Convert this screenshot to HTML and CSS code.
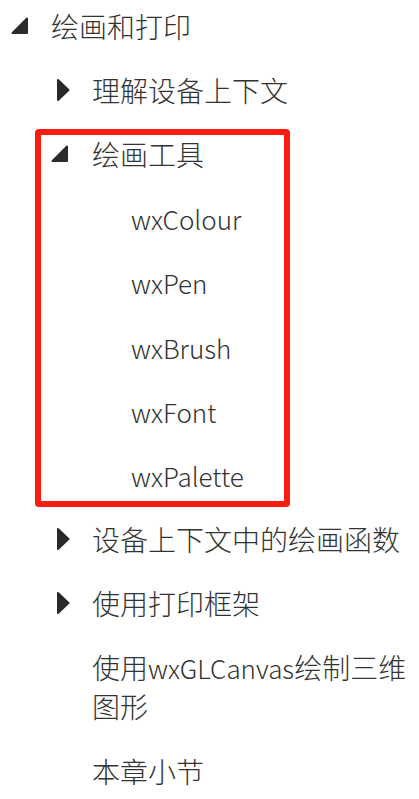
FILE: index.html
```html
<!DOCTYPE html>
<html lang="zh">
<head>
<meta charset="utf-8">
<link rel="stylesheet" href="styles.css">
</head>
<body>
<ul class="tree">
  <li class="row lvl0">
    <svg class="twisty" viewBox="0 0 40 39"><path class="tri" d="M16 11.5 L16 26 L1.5 26 Z"/></svg>
    <span class="label">绘画和打印</span>
  </li>
  <li class="row lvl1">
    <svg class="twisty" viewBox="0 0 40 39"><path class="tri" d="M7 9 L17.5 19 L7 29 Z"/></svg>
    <span class="label">理解设备上下文</span>
  </li>
  <li class="group">
    <ul class="sub">
      <li class="row lvl1">
        <svg class="twisty" viewBox="0 0 40 39"><path class="tri" d="M16 11.5 L16 26 L1.5 26 Z"/></svg>
        <span class="label">绘画工具</span>
      </li>
      <li class="row lvl2"><span class="label lat">wxColour</span></li>
      <li class="row lvl2"><span class="label lat">wxPen</span></li>
      <li class="row lvl2"><span class="label lat">wxBrush</span></li>
      <li class="row lvl2"><span class="label lat">wxFont</span></li>
      <li class="row lvl2"><span class="label lat">wxPalette</span></li>
    </ul>
    <div class="highlight"></div>
  </li>
  <li class="row lvl1">
    <svg class="twisty" viewBox="0 0 40 39"><path class="tri" d="M7 9 L17.5 19 L7 29 Z"/></svg>
    <span class="label">设备上下文中的绘画函数</span>
  </li>
  <li class="row lvl1">
    <svg class="twisty" viewBox="0 0 40 39"><path class="tri" d="M7 9 L17.5 19 L7 29 Z"/></svg>
    <span class="label">使用打印框架</span>
  </li>
  <li class="row leaf"><p class="label mixed"><span>使用</span><span class="lat">wxGLCanvas</span><span>绘制三维</span><span>图形</span></p></li>
  <li class="row leaf"><span class="label">本章小节</span></li>
</ul>
</body>
</html>
```
FILE: styles.css
```css
html, body {
  margin: 0;
  padding: 0;
  background: #ffffff;
}
body {
  width: 419px;
  overflow: hidden;
  font-family: "Noto Sans CJK SC", "Noto Sans", sans-serif;
  font-size: 28px;
  font-weight: 300;
  color: #333333;
}
.tree, .sub {
  list-style: none;
  margin: 0;
  padding: 0;
}
.tree {
  margin-top: -6px;
}
.group {
  position: relative;
}
.row {
  display: flex;
  align-items: flex-start;
  padding: 12.6px 0 12.6px 11px;
  line-height: 39px;
}
.lvl1 { padding-left: 51px; }
.lvl2 { padding-left: 131px; }
.leaf { padding-left: 92px; }
.mixed {
  margin: 0;
}
.twisty {
  flex: none;
  width: 40px;
  height: 39px;
}
.tri {
  fill: #2a2a2a;
  stroke: #2a2a2a;
  stroke-width: 2;
  stroke-linejoin: round;
}
.lat {
  font-size: 26px;
}
.lvl1 .label { padding-left: 1px; }
.highlight {
  position: absolute;
  left: 35px;
  top: 7px;
  width: 255px;
  height: 378px;
  box-sizing: border-box;
  border: 6px solid #fd1c12;
  border-radius: 4px;
  pointer-events: none;
}
```
